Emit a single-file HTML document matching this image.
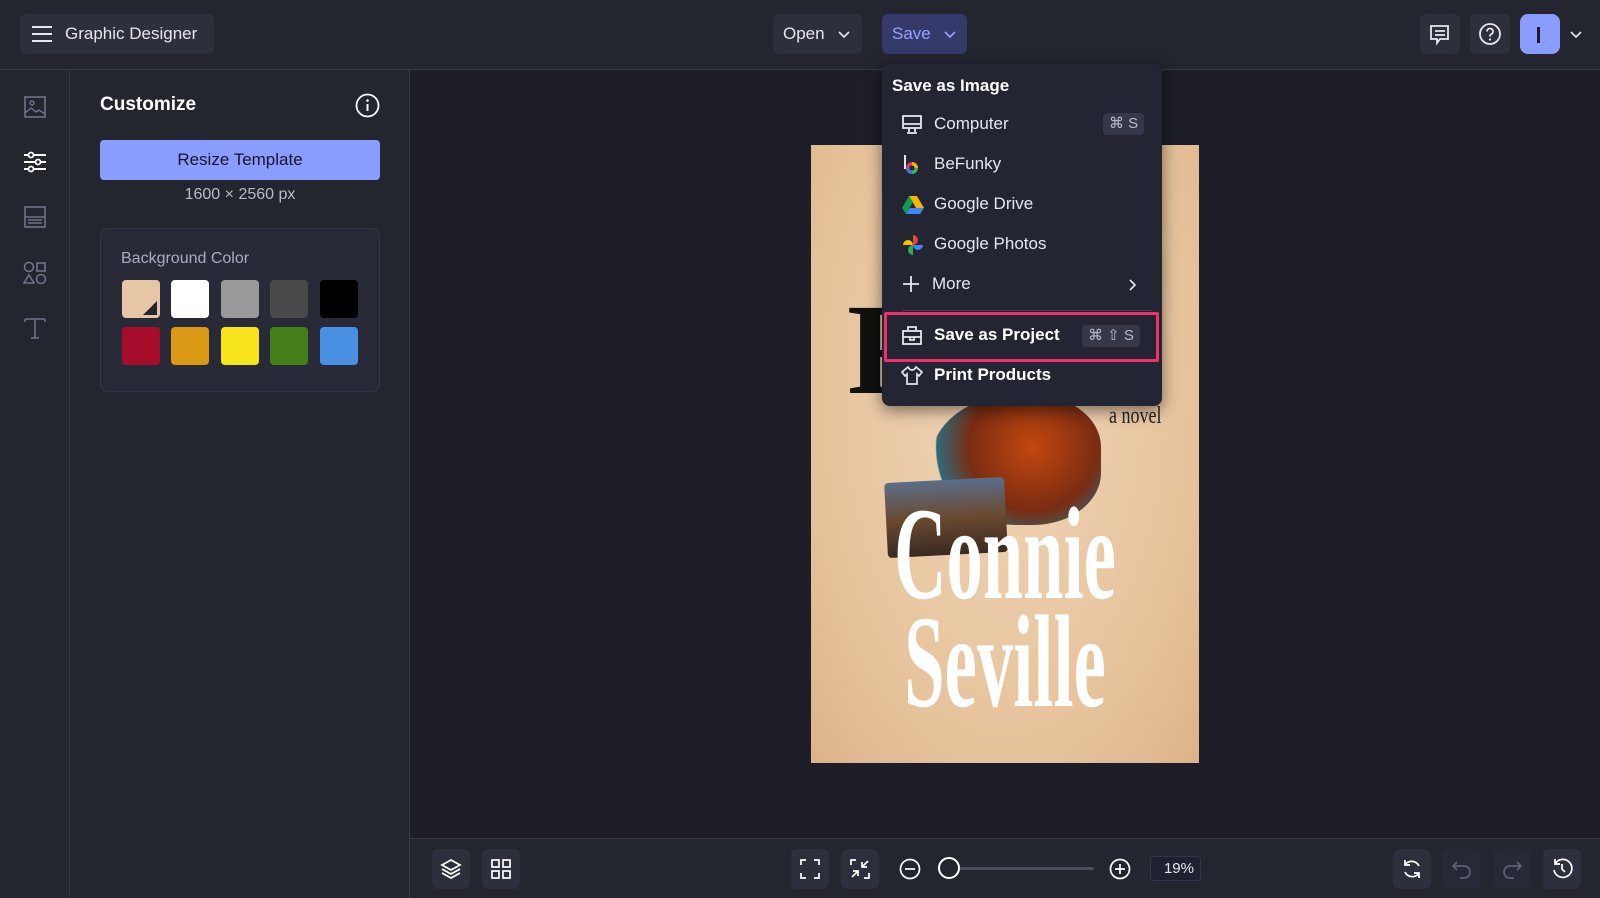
<!DOCTYPE html><html><head><meta charset="utf-8"><style>
*{box-sizing:border-box;margin:0;padding:0}
body{width:1600px;height:898px;overflow:hidden;background:#1d1e28;font-family:"Liberation Sans",sans-serif;color:#e6e7ee;position:relative}
.abs{position:absolute}
.top{left:0;top:0;width:1600px;height:70px;background:#23252f;border-bottom:1px solid #363845}
.btn{position:absolute;background:#2c2f3c;border-radius:6px}
.rail{left:0;top:70px;width:70px;height:828px;background:#23252f;border-right:1px solid #363845}
.panel{left:70px;top:70px;width:340px;height:828px;background:#23252f;border-right:1px solid #363845}
.bot{left:410px;top:838px;width:1190px;height:60px;background:#23252f;border-top:1px solid #363845}
.sw{position:absolute;width:38px;height:38px;border-radius:4px}
svg{position:absolute}
.dd{left:882px;top:64px;width:280px;height:342px;background:#232533;border-radius:8px;box-shadow:0 4px 16px rgba(0,0,0,.5)}
.it{position:absolute;left:52px;font-size:17px;color:#e6e7ee}
.kb{position:absolute;background:#353849;border-radius:4px;font-size:15px;color:#b9bccb;padding:0 6px;height:22px;line-height:22px}
</style></head><body>
<div class="abs top"></div>
<div class="btn" style="left:20px;top:14px;width:194px;height:40px"></div>
<svg style="left:31px;top:24px" width="22" height="20"><path d="M1 3h20M1 10h20M1 17h20" stroke="#e6e7ee" stroke-width="2"/></svg>
<div class="abs" style="left:65px;top:24px;font-size:17px">Graphic Designer</div>
<div class="btn" style="left:773px;top:14px;width:89px;height:40px"></div>
<div class="abs" style="left:783px;top:24px;font-size:17px">Open</div>
<svg style="left:838px;top:29px" width="12" height="10"><path d="M1 3l5 5 5-5" stroke="#e6e7ee" stroke-width="1.6" fill="none"/></svg>
<div class="btn" style="left:882px;top:14px;width:85px;height:40px;background:#363a6a"></div>
<div class="abs" style="left:892px;top:24px;font-size:17px;color:#97a3ff">Save</div>
<svg style="left:944px;top:29px" width="12" height="10"><path d="M1 3l5 5 5-5" stroke="#97a3ff" stroke-width="1.6" fill="none"/></svg>
<div class="btn" style="left:1420px;top:14px;width:40px;height:40px"></div>
<svg style="left:1429px;top:24px" width="22" height="22"><path d="M2 2h17v13h-8l-3 4v-4H2z M6 7h10M6 11h10" stroke="#e6e7ee" stroke-width="1.8" fill="none"/></svg>
<div class="btn" style="left:1470px;top:14px;width:40px;height:40px"></div>
<svg style="left:1478px;top:22px" width="24" height="24"><circle cx="12" cy="12" r="10" stroke="#e6e7ee" stroke-width="1.8" fill="none"/><path d="M9 9.5a3 3 0 1 1 4 2.8c-1 .4-1 1-1 2.2" stroke="#e6e7ee" stroke-width="1.8" fill="none"/><circle cx="12" cy="17.5" r="1.1" fill="#e6e7ee"/></svg>
<div class="btn" style="left:1520px;top:14px;width:40px;height:40px;background:#8b9cff;border-radius:8px"></div>
<div class="abs" style="left:1537px;top:27px;width:3px;height:16px;background:#1d1e28"></div>
<svg style="left:1570px;top:29px" width="12" height="10"><path d="M1 3l5 5 5-5" stroke="#e6e7ee" stroke-width="1.6" fill="none"/></svg>

<div class="abs rail"></div>
<svg style="left:24px;top:96px" width="22" height="22"><rect x="1" y="1" width="20" height="20" stroke="#6f7387" stroke-width="1.6" fill="none"/><circle cx="8" cy="7" r="2" stroke="#6f7387" stroke-width="1.4" fill="none"/><path d="M1 17l6-5 5 4 3-2 6 4" stroke="#6f7387" stroke-width="1.4" fill="none"/></svg>
<svg style="left:23px;top:151px" width="24" height="22"><path d="M1 4h22M1 11h22M1 18h22" stroke="#fff" stroke-width="2"/><circle cx="8" cy="4" r="2.5" fill="#23252f" stroke="#fff" stroke-width="1.8"/><circle cx="15" cy="11" r="2.5" fill="#23252f" stroke="#fff" stroke-width="1.8"/><circle cx="8" cy="18" r="2.5" fill="#23252f" stroke="#fff" stroke-width="1.8"/></svg>
<svg style="left:24px;top:206px" width="22" height="22"><rect x="1" y="1" width="20" height="20" stroke="#6f7387" stroke-width="1.6" fill="none"/><path d="M1 11h20M4 14h14M4 17h14" stroke="#6f7387" stroke-width="1.4"/></svg>
<svg style="left:23px;top:261px" width="24" height="24"><circle cx="6" cy="6" r="4.5" stroke="#6f7387" stroke-width="1.6" fill="none"/><rect x="14" y="2" width="8" height="8" stroke="#6f7387" stroke-width="1.6" fill="none"/><path d="M6 14l5 8H1z" stroke="#6f7387" stroke-width="1.6" fill="none"/><circle cx="18" cy="18" r="4.5" stroke="#6f7387" stroke-width="1.6" fill="none"/></svg>
<svg style="left:24px;top:317px" width="22" height="22"><path d="M1 2h20M1 2v3M21 2v3M11 2v19M7 21h8" stroke="#6f7387" stroke-width="1.6" fill="none"/></svg>

<div class="abs panel"></div>
<div class="abs" style="left:100px;top:94px;font-size:19px;font-weight:bold;color:#fff">Customize</div>
<svg style="left:355px;top:93px" width="25" height="25"><circle cx="12.5" cy="12.5" r="11" stroke="#fff" stroke-width="1.8" fill="none"/><path d="M12.5 11v7" stroke="#fff" stroke-width="2"/><circle cx="12.5" cy="7.5" r="1.3" fill="#fff"/></svg>
<div class="abs" style="left:100px;top:140px;width:280px;height:40px;background:#8b9cff;border-radius:4px;color:#15172a;font-size:17px;text-align:center;line-height:40px">Resize Template</div>
<div class="abs" style="left:100px;top:186px;width:280px;text-align:center;font-size:16px;color:#b9bccb">1600 × 2560 px</div>
<div class="abs" style="left:100px;top:228px;width:280px;height:164px;background:#282a38;border:1px solid #33364a;border-radius:8px"></div>
<div class="abs" style="left:121px;top:250px;font-size:16px;color:#a9adbe">Background Color</div>
<div class="sw" style="left:122px;top:280px;background:#e7c6a5;overflow:hidden"><div style="position:absolute;right:3px;bottom:3px;width:0;height:0;border-left:14px solid transparent;border-bottom:14px solid #23252f"></div></div>
<div class="sw" style="left:171px;top:280px;background:#fff"></div>
<div class="sw" style="left:221px;top:280px;background:#999"></div>
<div class="sw" style="left:270px;top:280px;background:#494949"></div>
<div class="sw" style="left:320px;top:280px;background:#000"></div>
<div class="sw" style="left:122px;top:327px;background:#a50d2a"></div>
<div class="sw" style="left:171px;top:327px;background:#d99915"></div>
<div class="sw" style="left:221px;top:327px;background:#f6e51d"></div>
<div class="sw" style="left:270px;top:327px;background:#467f1a"></div>
<div class="sw" style="left:320px;top:327px;background:#4a90e2"></div>

<!-- cover -->
<div class="abs" style="left:811px;top:145px;width:388px;height:618px;background:radial-gradient(ellipse at 50% 40%,#f0d6b8,#e6c29a 70%,#dcb389);overflow:hidden">
<div class="abs" style="left:36px;top:140px;font-family:'Liberation Serif',serif;font-weight:bold;font-size:130px;color:#111;line-height:1">R</div>
<div class="abs" style="left:298px;top:258px;font-family:'Liberation Serif',serif;font-size:24px;color:#222;transform:scaleX(.75);transform-origin:left">a novel</div>
<div class="abs" style="left:120px;top:250px;width:170px;height:130px;border-radius:50% 40% 40% 50%;background:radial-gradient(circle at 60% 40%,#c3470f,#7a2c12 50%,#2f6a7a 75%,transparent 76%)"></div>
<div class="abs" style="left:75px;top:335px;width:120px;height:75px;background:linear-gradient(#5a6e8a,#6a4a30 50%,#3a2a20);border-radius:4px;transform:rotate(-3deg)"></div>
<div class="abs" style="left:-100px;top:355px;width:588px;text-align:center;font-family:'Liberation Serif',serif;font-weight:bold;font-size:132px;color:#fff;line-height:108px;transform:scaleX(.55);transform-origin:center">Connie<br>Seville</div>
</div>

<!-- dropdown -->
<div class="abs dd"></div>
<div class="abs" style="left:892px;top:76px;font-size:17px;font-weight:bold;color:#fff">Save as Image</div>
<svg style="left:902px;top:115px" width="20" height="20"><rect x="1" y="1" width="18" height="12" stroke="#e6e7ee" stroke-width="1.8" fill="none"/><path d="M1 9h18M7 13v4M13 13v4M5 18h10" stroke="#e6e7ee" stroke-width="1.8"/></svg>
<div class="abs it" style="left:934px;top:114px">Computer</div>
<div class="kb" style="left:1103px;top:113px">⌘ S</div>
<svg style="left:903px;top:154px" width="20" height="22"><path d="M2 1v14" stroke="#e6e7ee" stroke-width="2"/><circle cx="9" cy="14" r="6" fill="#e03a6a"/><path d="M9 8a6 6 0 0 1 6 6H9z" fill="#f2b21c"/><path d="M9 14h6a6 6 0 0 1-6 6z" fill="#3ab05a"/><path d="M9 14v6a6 6 0 0 1-6-6z" fill="#3a7ae0"/><circle cx="9" cy="14" r="2.5" fill="#23252f"/></svg>
<div class="abs it" style="left:934px;top:154px">BeFunky</div>
<svg style="left:902px;top:195px" width="22" height="20"><path d="M7 1h8l7 12h-8z" fill="#f4b400"/><path d="M7 1l-7 12 4 6 7-12z" fill="#0f9d58"/><path d="M4 19h14l4-6H8z" fill="#4285f4"/></svg>
<div class="abs it" style="left:934px;top:194px">Google Drive</div>
<svg style="left:902px;top:234px" width="22" height="22"><path d="M11 11V1a5 5 0 0 1 0 10z" fill="#ea4335"/><path d="M11 11h10a5 5 0 0 1-10 0z" fill="#4285f4"/><path d="M11 11v10a5 5 0 0 1 0-10z" fill="#34a853"/><path d="M11 11H1a5 5 0 0 1 10 0z" fill="#fbbc04"/></svg>
<div class="abs it" style="left:934px;top:234px">Google Photos</div>
<svg style="left:902px;top:275px" width="18" height="18"><path d="M9 1v16M1 9h16" stroke="#e6e7ee" stroke-width="1.8"/></svg>
<div class="abs it" style="left:932px;top:274px">More</div>
<svg style="left:1128px;top:278px" width="10" height="14"><path d="M2 2l5 5-5 5" stroke="#e6e7ee" stroke-width="1.6" fill="none"/></svg>
<div class="abs" style="left:902px;top:310px;width:250px;height:1px;background:#3a3d4e"></div>
<div class="abs" style="left:884px;top:312px;width:275px;height:50px;border:3px solid #f0306a;border-radius:2px"></div>
<svg style="left:902px;top:326px" width="20" height="20"><rect x="1" y="5" width="18" height="13" stroke="#e6e7ee" stroke-width="1.8" fill="none"/><path d="M6 5V1h8v4M1 11h18M8 11v3h4v-3" stroke="#e6e7ee" stroke-width="1.8" fill="none"/></svg>
<div class="abs it" style="left:934px;top:325px;font-weight:bold;color:#fff">Save as Project</div>
<div class="kb" style="left:1082px;top:325px">⌘ ⇧ S</div>
<svg style="left:901px;top:366px" width="22" height="20"><path d="M7 1L1 6l3 4 2-2v10h10V8l2 2 3-4-6-5c-1 2-2 3-4 3s-3-1-4-3z" stroke="#e6e7ee" stroke-width="1.7" fill="none"/></svg>
<div class="abs it" style="left:934px;top:365px;font-weight:bold;color:#fff">Print Products</div>

<!-- bottom -->
<div class="abs bot"></div>
<div class="btn" style="left:432px;top:849px;width:38px;height:40px"></div>
<svg style="left:440px;top:858px" width="22" height="22"><path d="M11 2l9 5-9 5-9-5z M2 11l9 5 9-5 M2 15l9 5 9-5" stroke="#fff" stroke-width="1.7" fill="none"/></svg>
<div class="btn" style="left:482px;top:849px;width:38px;height:40px"></div>
<svg style="left:491px;top:859px" width="20" height="20"><rect x="1" y="1" width="7" height="7" stroke="#fff" stroke-width="1.7" fill="none"/><rect x="12" y="1" width="7" height="7" stroke="#fff" stroke-width="1.7" fill="none"/><rect x="1" y="12" width="7" height="7" stroke="#fff" stroke-width="1.7" fill="none"/><rect x="12" y="12" width="7" height="7" stroke="#fff" stroke-width="1.7" fill="none"/></svg>
<div class="btn" style="left:791px;top:849px;width:38px;height:40px"></div>
<svg style="left:800px;top:859px" width="20" height="20"><path d="M1 6V1h5M14 1h5v5M19 14v5h-5M6 19H1v-5" stroke="#fff" stroke-width="1.7" fill="none"/></svg>
<div class="btn" style="left:841px;top:849px;width:38px;height:40px"></div>
<svg style="left:850px;top:859px" width="20" height="20"><path d="M1 6V1h5M19 14v5h-5M12 8l6-6M12 3v5h5M8 12l-6 6M3 12h5v5" stroke="#fff" stroke-width="1.7" fill="none"/></svg>
<svg style="left:899px;top:858px" width="22" height="22"><circle cx="11" cy="11" r="9.5" stroke="#fff" stroke-width="1.7" fill="none"/><path d="M6 11h10" stroke="#fff" stroke-width="1.7"/></svg>
<div class="abs" style="left:950px;top:867px;width:144px;height:3px;background:#4a4d5e;border-radius:2px"></div>
<div class="abs" style="left:938px;top:857px;width:22px;height:22px;border-radius:50%;border:2px solid #fff;background:#23252f"></div>
<svg style="left:1109px;top:858px" width="22" height="22"><circle cx="11" cy="11" r="9.5" stroke="#fff" stroke-width="1.7" fill="none"/><path d="M6 11h10M11 6v10" stroke="#fff" stroke-width="1.7"/></svg>
<div class="abs" style="left:1150px;top:856px;width:51px;height:25px;border:1px solid #33364a;border-radius:4px;background:#1f2130;font-size:15px;text-align:right;padding-right:6px;line-height:23px">19%</div>
<div class="btn" style="left:1393px;top:849px;width:38px;height:40px"></div>
<svg style="left:1401px;top:858px" width="22" height="22"><path d="M18 8A8 8 0 0 0 4 7M4 2v5h5M4 14a8 8 0 0 0 14 1M18 20v-5h-5" stroke="#fff" stroke-width="1.7" fill="none"/></svg>
<div class="btn" style="left:1443px;top:849px;width:38px;height:40px;background:#272a36"></div>
<svg style="left:1451px;top:860px" width="22" height="20"><path d="M6 2L2 6l4 4M2 6h11a6 6 0 0 1 0 12H9" stroke="#5f6274" stroke-width="1.7" fill="none"/></svg>
<div class="btn" style="left:1493px;top:849px;width:38px;height:40px;background:#272a36"></div>
<svg style="left:1501px;top:860px" width="22" height="20"><path d="M16 2l4 4-4 4M20 6H9a6 6 0 0 0 0 12h4" stroke="#5f6274" stroke-width="1.7" fill="none"/></svg>
<div class="btn" style="left:1543px;top:849px;width:38px;height:40px"></div>
<svg style="left:1551px;top:858px" width="22" height="22"><path d="M4 6a9 9 0 1 1-1 6M4 1v5h5M11 6v5l3 3" stroke="#fff" stroke-width="1.7" fill="none"/></svg>
</body></html>
